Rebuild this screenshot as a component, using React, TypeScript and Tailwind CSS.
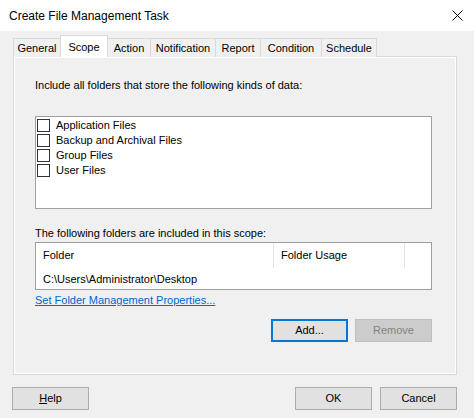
import React from "react";

const tabs = [
  { label: "General", w: "w-[48px]" },
  { label: "Scope", w: "w-[48px]", active: true },
  { label: "Action", w: "w-[44px]" },
  { label: "Notification", w: "w-[66px]" },
  { label: "Report", w: "w-[46px]" },
  { label: "Condition", w: "w-[62px]" },
  { label: "Schedule", w: "w-[56px]" },
];

const dataKinds = ["Application Files", "Backup and Archival Files", "Group Files", "User Files"];

const font = { fontFamily: '"Liberation Sans", Arial, sans-serif' };

const DialogButton: React.FC<{
  children: React.ReactNode;
  className?: string;
  variant?: "default" | "focused" | "disabled";
}> = ({ children, className = "", variant = "default" }) => {
  const look =
    variant === "focused"
      ? "bg-[#e1e1e1] border-[#0078d7] border-2 text-black"
      : variant === "disabled"
      ? "bg-[#cccccc] border border-[#bfbfbf] text-[#838383]"
      : "bg-[#e1e1e1] border border-[#adadad] text-black";
  return (
    <button
      className={`h-[23px] w-[77px] flex items-center justify-center text-[11px] ${look} ${className}`}
    >
      {children}
    </button>
  );
};

export default function App() {
  return (
    <div className="w-[474px] h-[418px] flex flex-col bg-[#f0f0f0] text-black overflow-hidden" style={font}>
      {/* Title bar */}
      <div className="h-[31px] bg-white flex items-center justify-between pl-[9px] pr-[11px] shrink-0">
        <span className="text-[12px] leading-none">Create File Management Task</span>
        <svg width="11" height="11" viewBox="0 0 11 11" className="text-black">
          <path d="M0.5 0.5L10.5 10.5M10.5 0.5L0.5 10.5" stroke="currentColor" strokeWidth="1" />
        </svg>
      </div>

      {/* Tabs */}
      <div className="flex items-end pl-[14px] pt-[4px] h-[26px] shrink-0 relative z-10">
        {tabs.map((t) =>
          t.active ? (
            <div
              key={t.label}
              className={`${t.w} h-[22px] -ml-px bg-white border border-[#d9d9d9] border-b-0 flex items-start justify-center pt-[3px] text-[11px]`}
            >
              {t.label}
            </div>
          ) : (
            <div
              key={t.label}
              className={`${t.w} h-[19px] -ml-px bg-[#f0f0f0] border border-[#d9d9d9] border-b-0 flex items-center justify-center text-[11px]`}
            >
              {t.label}
            </div>
          )
        )}
      </div>

      {/* Panel */}
      <div className="mx-[13px] w-[444px] h-[319px] -mt-px border border-[#d9d9d9] shadow-[inset_0_0_0_1px_#ffffff] bg-[#f0f0f0] pl-[21px] pt-[21px] shrink-0">
        <div className="text-[11px] leading-[15px]">Include all folders that store the following kinds of data:</div>

        <div className="mt-[23px] w-[397px] h-[93px] bg-white border border-[#a0a0a0] pt-[1px] pl-[1px]">
          {dataKinds.map((k) => (
            <div key={k} className="h-[15px] flex items-center">
              <span className="w-[13px] h-[13px] border border-[#333333] bg-white shrink-0" />
              <span className="ml-[6px] text-[11px] leading-[15px]">{k}</span>
            </div>
          ))}
        </div>

        <div className="mt-[17px] text-[11px] leading-[15px]">The following folders are included in this scope:</div>

        <div className="mt-px w-[397px] h-[48px] bg-white border border-[#a0a0a0] flex flex-col">
          <div className="h-[25px] flex shrink-0">
            <div className="w-[238px] border-r border-[#e5e5e5] pl-[7px] flex items-center text-[11px]">Folder</div>
            <div className="w-[131px] border-r border-[#e5e5e5] pl-[7px] flex items-center text-[11px]">Folder Usage</div>
          </div>
          <div className="pl-[7px] text-[11px] leading-[15px] mt-[4px]">C:\Users\Administrator\Desktop</div>
        </div>

        <a className="block mt-[3px] text-[11px] leading-[15px] text-[#0066cc] underline w-fit">
          Set Folder Management Properties...
        </a>

        <div className="mt-[11px] w-[397px] flex justify-end gap-[7px]">
          <DialogButton variant="focused">Add...</DialogButton>
          <DialogButton variant="disabled">Remove</DialogButton>
        </div>
      </div>

      {/* Footer */}
      <div className="flex items-center justify-between pl-[12px] pr-[17px] mt-[12px]">
        <DialogButton>
          <span>
            <span className="underline">H</span>elp
          </span>
        </DialogButton>
        <div className="flex gap-[8px]">
          <DialogButton>OK</DialogButton>
          <DialogButton>Cancel</DialogButton>
        </div>
      </div>
    </div>
  );
}
